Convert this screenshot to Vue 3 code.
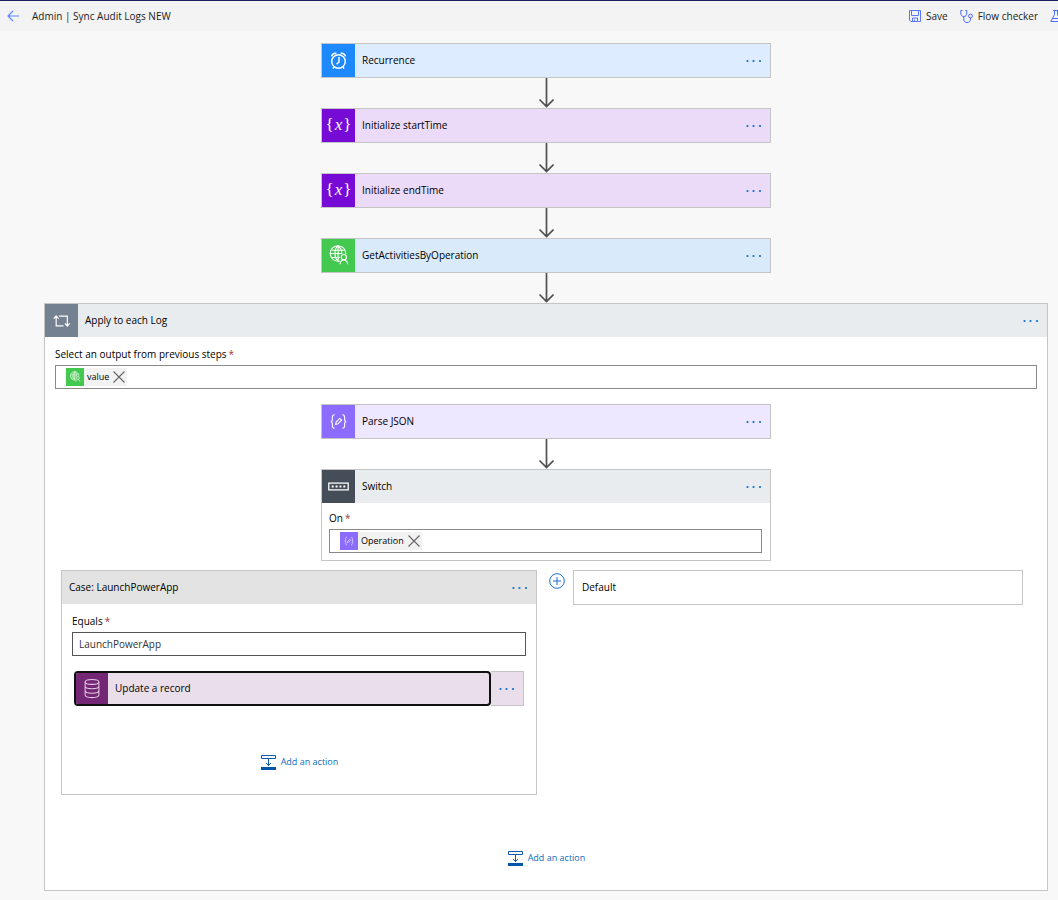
<template>
  <div class="designer">
    <svg class="sprite" aria-hidden="true">
      <symbol id="recurrence" viewBox="0 0 34 34">
        <g fill="none" stroke="#fff" stroke-width="1.5">
          <circle cx="17" cy="18" r="7" />
          <path d="M17.5 13.5V18.5L15 20.8M9.8 12.8A4.2 4.2 0 0 1 14.8 9.6M24.2 12.8A4.2 4.2 0 0 0 19.2 9.6M12.5 23.6L11.2 25.3M21.5 23.6L22.8 25.3" />
        </g>
      </symbol>
      <symbol id="globe" viewBox="0 0 34 34">
        <g fill="none" stroke="#fff" stroke-width="1.1">
          <path d="M18.5 22.6A8 8 0 1 1 24.4 15.6" />
          <path d="M17 22.8C12.2 20 12.2 9.8 16.6 7M16.6 7C19.5 9 20.4 12 20.4 15.5M9.8 11.5H23.5M8.6 15H20M9.6 19H18.5M16.6 7V22.5" />
          <circle cx="22.5" cy="18.7" r="2.7" />
          <path d="M18.6 26C18.8 23.2 20.3 21.7 22.5 21.7S26.2 23.2 26.4 26" />
        </g>
      </symbol>
      <symbol id="loop" viewBox="0 0 34 34">
        <path d="M19 22.5H11.5V12.5M9 15L11.5 12.3L14 15M14.5 12.5H23V22M20.5 20L23 22.7L25.5 20" fill="none" stroke="#fff" stroke-width="1.2" />
      </symbol>
      <symbol id="json" viewBox="0 0 34 34">
        <g fill="none" stroke="#fff" stroke-width="1.1">
          <path d="M13 10C11 10 10.7 10.8 10.7 12.5V14.5C10.7 16.3 10.3 17 9 17C10.3 17 10.7 17.7 10.7 19.5V21.5C10.7 23.2 11 24 13 24" />
          <path d="M21 10C23 10 23.3 10.8 23.3 12.5V14.5C23.3 16.3 23.7 17 25 17C23.7 17 23.3 17.7 23.3 19.5V21.5C23.3 23.2 23 24 21 24" />
          <path d="M14 20L14.6 17.6L18.3 13.9L20.1 15.7L16.4 19.4Z" />
        </g>
      </symbol>
      <symbol id="switch" viewBox="0 0 34 34">
        <rect x="7" y="13.5" width="20" height="7" fill="none" stroke="#fff" stroke-width="1.3" />
        <path d="M10 17H12M14 17H16M18 17H20M22 17H24" stroke="#fff" stroke-width="2" />
      </symbol>
      <symbol id="database" viewBox="0 0 34 34">
        <g fill="none" stroke="#e6cbe4" stroke-width="1.1">
          <ellipse cx="17" cy="10" rx="7.3" ry="2.6" />
          <path d="M9.7 10V24C9.7 25.5 13 26.7 17 26.7S24.3 25.5 24.3 24V10M9.7 14.7C9.7 16.2 13 17.3 17 17.3S24.3 16.2 24.3 14.7M9.7 19.4C9.7 20.9 13 22 17 22S24.3 20.9 24.3 19.4" />
        </g>
      </symbol>
      <symbol id="dots" viewBox="0 0 16 4">
        <g fill="#0a6ed1">
          <circle cx="1.5" cy="2" r="1.1" />
          <circle cx="7.5" cy="2" r="1.1" />
          <circle cx="14" cy="2" r="1.1" />
        </g>
      </symbol>
      <symbol id="cross" viewBox="0 0 12 12">
        <path d="M0.5 0.5L11.5 11.5M11.5 0.5L0.5 11.5" stroke="#666" stroke-width="1.1" />
      </symbol>
      <symbol id="arrow" viewBox="0 0 16 30">
        <path d="M8.5 0V28M1.5 21.5L8.5 28.5L15.5 21.5" fill="none" stroke="#505050" stroke-width="1.7" />
      </symbol>
      <symbol id="insert" viewBox="0 0 16 16">
        <path d="M1.5 1.5H15.5V4.5H1.5ZM8.5 4.5V11.5M6 9L8.5 11.5L11 9" fill="none" stroke="#0f5cae" />
        <path d="M1 13H16V16H1Z" fill="#0058ad" />
      </symbol>
    </svg>

    <header class="topbar">
      <button class="back" aria-label="Back">
        <svg width="12" height="12" viewBox="0 0 12 12"><path d="M12 6H1M6 1L1 6L6 11" fill="none" stroke="#6488ff" stroke-width="1.2" /></svg>
      </button>
      <h1 class="title">Admin | Sync Audit Logs NEW</h1>
      <div class="commands">
        <button class="command">
          <svg width="12" height="12" viewBox="0 0 12 12" fill="none" stroke="#5b78fb">
            <path d="M0.5 0.5H11.5V11.5H2L0.5 10ZM2.5 0.5V5.5H9.5V0.5M3.5 11.5V8H8.5V11.5M5.5 9.5V11.5" />
          </svg>
          Save
        </button>
        <button class="command">
          <svg width="13" height="13" viewBox="0 0 13 13" fill="none" stroke="#4b6bfb">
            <path d="M2.5 0.5H0.8V3C0.8 5.5 2 6.5 3.8 6.5S6.8 5.5 6.8 3V0.5H5.2M3.8 6.5V9C3.8 11.5 5 12.5 7 12.5S10.5 11.5 10.5 9V8" />
            <circle cx="10.5" cy="6" r="1.9" />
          </svg>
          Flow checker
        </button>
        <button class="command" aria-label="Test">
          <svg width="12" height="12" viewBox="0 0 12 12" fill="none" stroke="#4b6bfb">
            <path d="M3 0.5H9M4.5 0.5V4.5L0.8 11.5H11.2L7.5 4.5V0.5M2.5 8.5H9.5" />
          </svg>
        </button>
      </div>
    </header>

    <main class="canvas">
      <template v-for="step in steps" :key="step.name">
        <div class="card" :class="step.kind">
          <span v-if="step.kind === 'variable'" class="icon braces">{<i>x</i>}</span>
          <svg v-else class="icon"><use :href="'#' + step.icon" /></svg>
          <span class="name">{{ step.name }}</span>
          <button class="menu" :aria-label="step.name + ' menu'"><svg><use href="#dots" /></svg></button>
        </div>
        <svg class="arrow"><use href="#arrow" /></svg>
      </template>

      <section class="scope">
        <div class="head loop">
          <svg class="icon"><use href="#loop" /></svg>
          <span class="name">Apply to each Log</span>
          <button class="menu" aria-label="Apply to each Log menu"><svg><use href="#dots" /></svg></button>
        </div>
        <div class="source">
          <label for="source">Select an output from previous steps<span class="required">*</span></label>
          <div class="tokens">
            <span class="token http">
              <svg class="token-icon"><use href="#globe" /></svg>
              value
              <button aria-label="Remove value"><svg><use href="#cross" /></svg></button>
            </span>
            <input id="source" type="text">
          </div>
        </div>

        <div class="inner">
          <div class="card parse">
            <svg class="icon"><use href="#json" /></svg>
            <span class="name">Parse JSON</span>
            <button class="menu" aria-label="Parse JSON menu"><svg><use href="#dots" /></svg></button>
          </div>
          <svg class="arrow"><use href="#arrow" /></svg>
          <div class="switch-card">
            <div class="head switch">
              <svg class="icon"><use href="#switch" /></svg>
              <span class="name">Switch</span>
              <button class="menu" aria-label="Switch menu"><svg><use href="#dots" /></svg></button>
            </div>
            <div class="on">
              <label for="on">On<span class="required">*</span></label>
              <div class="tokens">
                <span class="token parse">
                  <svg class="token-icon"><use href="#json" /></svg>
                  Operation
                  <button aria-label="Remove Operation"><svg><use href="#cross" /></svg></button>
                </span>
                <input id="on" type="text">
              </div>
            </div>
          </div>
        </div>

        <div class="branches">
          <section class="case">
            <div class="head case-head">
              <span class="name">Case: LaunchPowerApp</span>
              <button class="menu" aria-label="Case menu"><svg><use href="#dots" /></svg></button>
            </div>
            <div class="case-body">
              <label for="equals">Equals<span class="required">*</span></label>
              <input id="equals" v-model="equals" class="equals" type="text">
              <div class="record">
                <button class="record-main">
                  <svg class="icon"><use href="#database" /></svg>
                  <span class="name">Update a record</span>
                </button>
                <button class="record-menu" aria-label="Update a record menu"><svg><use href="#dots" /></svg></button>
              </div>
              <button class="add"><svg><use href="#insert" /></svg>Add an action</button>
            </div>
          </section>
          <button class="plus" aria-label="Add a case">
            <svg width="16" height="16" viewBox="0 0 16 16" fill="none" stroke="#1a6fd0">
              <circle cx="8" cy="8" r="7.3" />
              <path d="M8 4V12M4 8H12" />
            </svg>
          </button>
          <div class="default">Default</div>
        </div>

        <button class="add outer"><svg><use href="#insert" /></svg>Add an action</button>
      </section>
    </main>
  </div>
</template>

<script setup>
import { ref } from 'vue'

const steps = [
  { name: 'Recurrence', icon: 'recurrence', kind: 'schedule' },
  { name: 'Initialize startTime', kind: 'variable' },
  { name: 'Initialize endTime', kind: 'variable' },
  { name: 'GetActivitiesByOperation', icon: 'globe', kind: 'http' },
]

const equals = ref('LaunchPowerApp')
</script>

<style>
body {
  margin: 0;
  background: #f8f8f8;
}
</style>

<style scoped>
.designer {
  font: 10px/16px "Segoe UI", "Open Sans", sans-serif;
  color: #000;
  overflow: hidden;
}
.designer * {
  box-sizing: border-box;
}
.sprite {
  position: absolute;
  width: 0;
  height: 0;
}
button {
  display: flex;
  align-items: center;
  padding: 0;
  border: 0;
  background: none;
  font: inherit;
  color: inherit;
  cursor: pointer;
}
input {
  min-width: 0;
  border: 0;
  background: none;
  font: inherit;
}
label {
  display: block;
}
.topbar {
  display: flex;
  align-items: center;
  height: 31px;
  padding-left: 7px;
  border-top: 1px solid #1b1f62;
  background: #f3f3f3;
  color: #222;
}
.title {
  margin: 0 auto 0 13px;
  font-size: 10px;
  font-weight: 400;
}
.commands {
  display: flex;
  gap: 12px;
  margin-right: -4px;
}
.command {
  gap: 5px;
  white-space: nowrap;
}
.canvas {
  display: flex;
  flex-direction: column;
  align-items: center;
  padding: 12px 10px 9px 44px;
}
.card,
.head {
  display: flex;
  align-items: center;
}
.card {
  width: 450px;
  max-width: 100%;
  height: 35px;
  border: 1px solid #c5c5c5;
}
.head {
  height: 33px;
  background: #e8ecef;
}
.icon {
  flex: none;
  width: 33px;
  height: 33px;
}
.braces {
  display: flex;
  align-items: center;
  justify-content: center;
  gap: 1px;
  padding-bottom: 2px;
  font: 17px/33px "Liberation Serif", serif;
  color: #fff;
}
.name {
  flex: 1;
  padding: 0 0 1px 7px;
  text-align: left;
}
.menu {
  height: 33px;
  padding: 1px 8px 0;
}
.menu svg,
.record-menu svg {
  width: 16px;
  height: 4px;
}
.schedule { background: #deecff; }
.schedule .icon { background: #1e88ff; }
.variable { background: #ebdaf8; }
.variable .icon { background: #770bd6; }
.http { background: #d9ebfb; }
.http .icon,
.http .token-icon { background: #43c94f; }
.parse { background: #ede7ff; }
.parse .icon,
.parse .token-icon { background: #8c6cff; }
.loop .icon { background: #748191; }
.switch .icon { background: #454d59; }
.arrow {
  width: 16px;
  height: 30px;
}
.scope {
  width: 100%;
  border: 1px solid #c5c5c5;
  background: #fff;
  padding-bottom: 24px;
}
.source {
  padding: 9px 10px 15px;
}
.required {
  padding-left: 2px;
  color: #a4373a;
}
.tokens {
  display: flex;
  align-items: center;
  height: 24px;
  margin-top: 3px;
  padding-left: 10px;
  border: 1px solid #8a8a8a;
  background: #fff;
}
.tokens input {
  flex: 1;
}
.tokens .token {
  display: flex;
  align-items: center;
  gap: 3px;
  height: 18px;
  padding-right: 1px;
  background: #f2f2f2;
  font-size: 9px;
}
.token-icon {
  width: 18px;
  height: 18px;
}
.token button svg {
  width: 14px;
  height: 12px;
}
.inner {
  display: flex;
  flex-direction: column;
  align-items: center;
}
.switch-card {
  width: 450px;
  max-width: 100%;
  border: 1px solid #c5c5c5;
}
.on {
  padding: 7px 8px 7px 7px;
}
.branches {
  display: grid;
  grid-template-columns: 476fr 36px 450fr;
  align-items: start;
  padding: 9px 24px 0 16px;
}
.case {
  border: 1px solid #c5c5c5;
}
.case-head {
  background: #e3e3e3;
}
.case-body {
  padding: 9px 10px 24px;
}
.equals {
  width: 100%;
  height: 24px;
  margin-top: 3px;
  padding: 0 6px;
  border: 1px solid #555;
  color: #333;
}
.record {
  display: flex;
  margin: 15px 2px 48px;
}
.record-main {
  flex: 1;
  height: 35px;
  border: 2px solid #111;
  border-radius: 4px;
  background: #eadeea;
  overflow: hidden;
}
.record-main .icon {
  width: 32px;
  background: #742774;
}
.record-menu {
  width: 33px;
  justify-content: center;
  border: 1px solid #c5c5c5;
  border-left: 0;
  background: #eadeea;
}
.add {
  gap: 5px;
  margin: 0 auto;
  font-size: 9px;
  color: #0f6cbd;
}
.add svg {
  width: 16px;
  height: 16px;
}
.outer {
  margin-top: 55px;
}
.plus {
  margin: 3px auto 0 12px;
}
.default {
  height: 35px;
  padding: 8px;
  border: 1px solid #c5c5c5;
}
</style>
